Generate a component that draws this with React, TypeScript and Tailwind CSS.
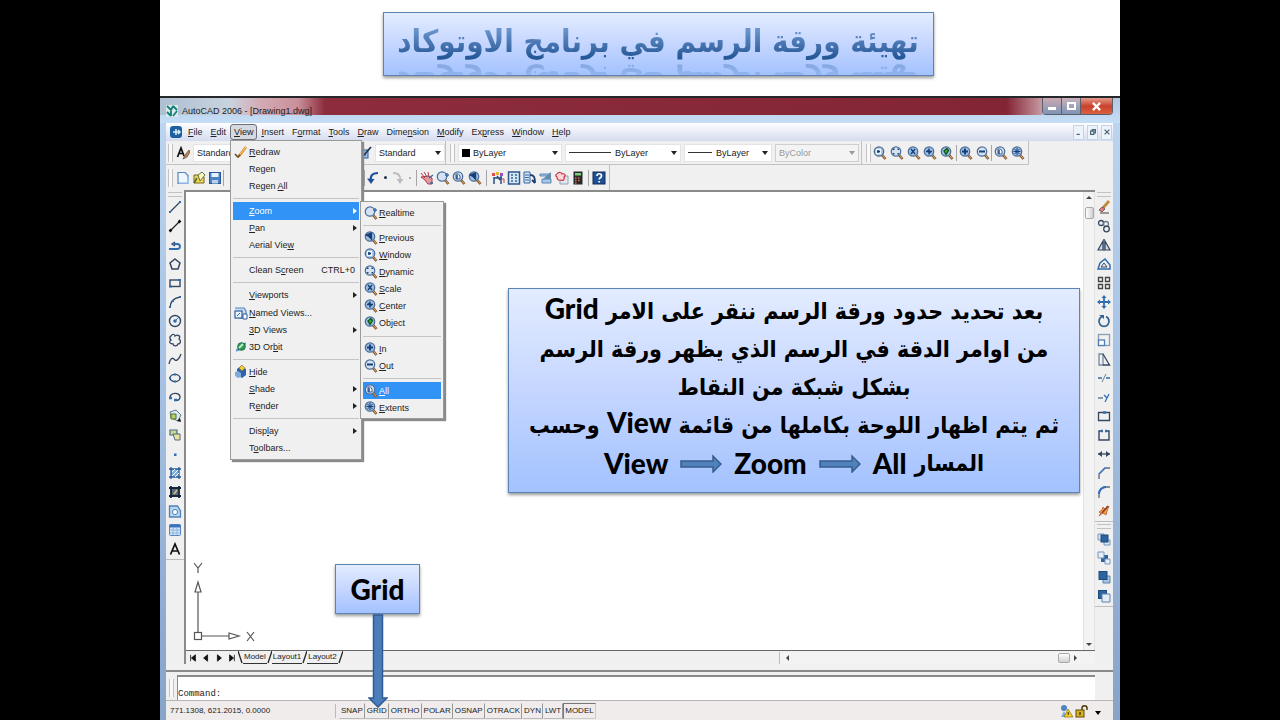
import React from "react";

type MenuEntry = {
  label: string;
  hot?: number;
  icon?: React.ReactNode;
  arrow?: boolean;
  shortcut?: string;
  active?: boolean;
  children?: (MenuEntry | null)[];
};

const Svg = ({ children, size = "size-[14px]" }: { children: React.ReactNode; size?: string }) => (
  <svg viewBox="0 0 14 14" className={`${size} shrink-0`} fill="none" aria-hidden="true">
    {children}
  </svg>
);

const Mag = ({ children, plain }: { children?: React.ReactNode; plain?: boolean }) => (
  <Svg>
    <path d="M9 9l3.5 4" stroke="#6b4a2c" strokeWidth="2.6" />
    <path d="M9.2 9l3.2 3.6" stroke="#e0a25c" strokeWidth="1.1" />
    <circle cx="6" cy="5.5" r="4.7" fill={plain ? "#d3e3f3" : "#9dbfe2"} stroke="#4f6f97" strokeWidth="1.3" />
    <g stroke="#173f78" strokeWidth="1.4">{children}</g>
  </Svg>
);

const magPrevious = (
  <Mag>
    <path d="M2.5 4l5-2v6l-3-3z" fill="#173f78" />
  </Mag>
);
const magRealtime = (
  <Mag plain>
    <path d="M9 4h4M11 2v4" stroke="#3f6ea8" />
  </Mag>
);
const magWindow = (
  <Mag>
    <path d="M3.5 3.5h4v4h-4z" stroke="#f3f8fd" />
    <path d="M5 4v3M4 5.5h3" />
  </Mag>
);
const magDynamic = (
  <Mag plain>
    <path d="M3.5 4v-.8h1M7.5 3.2h1V4M3.5 7v.8h1M8.5 7v.8h-1" />
  </Mag>
);
const magScale = (
  <Mag>
    <path d="M4 3l4 5M8 3l-4 5" />
  </Mag>
);
const magCenter = (
  <Mag>
    <path d="M6 2.5v6M3 5.5h6M4.5 4l3 3" />
  </Mag>
);
const magObject = (
  <Mag>
    <path d="M4 5l3-2.5 1.5 2L6 8.5z" fill="#35b344" stroke="#14561f" />
  </Mag>
);
const magIn = (
  <Mag>
    <path d="M6 2.5v6M3 5.5h6" strokeWidth="2" />
  </Mag>
);
const magOut = (
  <Mag plain>
    <path d="M3 5.5h6" strokeWidth="2" />
  </Mag>
);
const magAll = (
  <Mag plain>
    <path d="M4 3h2.5L8 5v3H4z" fill="#f7fbff" stroke="#3d5f8d" strokeWidth="1" />
    <path d="M5 4v4" />
  </Mag>
);
const magExtents = (
  <Mag>
    <path d="M3.5 3l5 5M8.5 3l-5 5M6 2v7M2.5 5.5h7" strokeWidth="1" />
  </Mag>
);

const cubeIcon = (
  <Svg>
    <path d="M3 4l4-3 5 3v6l-4 3-5-3z" fill="#2f62a8" />
    <path d="M5 3l3-3 3 3-3 3z" fill="#f2cc3c" stroke="#8a6a10" strokeWidth=".6" />
    <path d="M1 7l3-1 3 2v4l-3 1-3-2z" fill="#7eaadf" />
  </Svg>
);
const orbitIcon = (
  <Svg>
    <ellipse cx="7" cy="7" rx="6.5" ry="2" transform="rotate(-40 7 7)" fill="#5d9bd8" />
    <circle cx="7.5" cy="6.500" r="3.800" fill="#2f9d55" stroke="#1c6d42" />
    <path d="M5 8l4-4" stroke="#bdf0cb" strokeWidth="1.8" />
  </Svg>
);
const namedViewsIcon = (
  <Svg>
    <path d="M1 2h9l2 3v7H5" fill="#c8dcf2" stroke="#4f83bf" strokeWidth="1.2" />
    <rect x="1" y="5" width="7" height="7" fill="#eef5fc" stroke="#2d5f9f" strokeWidth="1.2" />
    <path d="M3 10l3-3M9 8h4v5H9z" stroke="#2d5f9f" fill="#fff" />
  </Svg>
);
const pencilIcon = (
  <Svg>
    <path d="M5 11L12 2" stroke="#d98a2c" strokeWidth="2.6" />
    <path d="M6 9L12 2" stroke="#fbd585" strokeWidth="1" />
    <path d="M1 9l3 3 2-2" stroke="#6b4b22" strokeWidth="1.6" />
  </Svg>
);
const letterBrush = (
  <Svg>
    <path d="M1.500 11L5 2l3 8M2.500 7.500h5" stroke="#111" strokeWidth="1.7" />
    <path d="M13 4l-4 5-2 4 4-2 3-5z" fill="#c78648" stroke="#333" strokeWidth=".6" />
  </Svg>
);
const styleIcon = (
  <Svg>
    <rect x="1" y="4" width="9" height="8" fill="#9ec3ec" stroke="#2b5b9b" />
    <path d="M3 9h5M5 6v5" stroke="#18427c" />
    <path d="M13 1L6 9" stroke="#23364f" strokeWidth="1.8" />
  </Svg>
);
const newIcon = (
  <Svg>
    <path d="M2 1.500h7l3 3v8H2z" fill="#eff6fd" stroke="#5487bf" strokeWidth="1.200" />
    <path d="M3 12h9V7" stroke="#a5c8ea" strokeWidth="1.500" />
  </Svg>
);
const openIcon = (
  <Svg>
    <path d="M2 12V4h4l1 2h5v6z" fill="#f1d55a" stroke="#7b6714" />
    <path d="M6 4l4-3 3 3-5 6z" fill="#fff3b8" stroke="#5c7a45" />
    <path d="M2 12l3-5" stroke="#4d6b2d" strokeWidth="1.500" />
  </Svg>
);
const saveIcon = (
  <Svg>
    <rect x="1.500" y="1.500" width="11" height="11" fill="#4b83c5" stroke="#275797" />
    <rect x="3.500" y="2" width="7" height="4" fill="#e9f2fb" />
    <rect x="4" y="9" width="6" height="3.500" fill="#b8d2ee" />
  </Svg>
);
const undoIcon = (
  <Svg>
    <path d="M12 2C6 2 4 5 5 10" stroke="#1f4e9a" strokeWidth="2.200" />
    <path d="M1 7.500l4 5.500 3.500-5z" fill="#1f4e9a" />
  </Svg>
);
const redoIcon = (
  <Svg>
    <path d="M2 2c6 0 8 3 7 8" stroke="#b9bcc0" strokeWidth="1.800" />
    <path d="M5.500 8L9 13l3.500-5z" fill="#b9bcc0" />
  </Svg>
);
const panIcon = (
  <Svg>
    <path d="M1 2l4 5M4 1l3 5M8 1l1 5M1 6l4 3 3 4h4V7L8 5z" fill="#e49a9a" stroke="#a63d4c" />
    <path d="M9 7l4-3M10 12h3" stroke="#3a6ba8" strokeWidth="1.500" />
  </Svg>
);
const propsIcon = (
  <Svg>
    <path d="M1 2h3v3H1z" fill="#e84b4b" />
    <path d="M5 1h3v3H5z" fill="#e5b52f" />
    <path d="M9 2h3v3H9z" fill="#a04fc2" />
    <path d="M3 6v7M3 7h8M10 5v8M6 5l3 4" stroke="#274f87" strokeWidth="1.500" />
    <path d="M11 8h2v4" stroke="#c64c35" />
  </Svg>
);
const designIcon = (
  <Svg>
    <rect x="1.500" y="1" width="11" height="12" fill="#d8e7f6" stroke="#2c578e" strokeWidth="1.500" />
    <path d="M4 4h2M8 4h2M4 7h2M8 7h2M4 10h2M8 10h2" stroke="#2c6a8e" strokeWidth="1.600" />
  </Svg>
);
const paletteIcon = (
  <Svg>
    <path d="M1 1h6v11H1z" fill="#d8e7f6" stroke="#34649f" />
    <path d="M2 4h4M2 6.500h4M2 9h4" stroke="#34649f" />
    <path d="M7 4c4 0 5 2 5 8M9 9l3 3" stroke="#1c3f70" strokeWidth="1.800" />
  </Svg>
);
const sheetIcon = (
  <Svg>
    <path d="M1 3h10v2H1zM3 8h9v4H3z" fill="#a6c8e9" stroke="#5b87b5" />
    <path d="M12 1L4 8h8z" fill="#648cae" />
  </Svg>
);
const markupIcon = (
  <Svg>
    <path d="M5 5h8v8H5z" fill="#dfe8f2" stroke="#8ea3b8" />
    <path d="M2 3c2-3 5-1 5 0 3-1 4 2 2 3 1 3-1 4-3 3-3 1-4-1-4-3-2-1-1-3 0-3z" fill="#f9d9dc" stroke="#cf3342" strokeWidth="1.200" />
  </Svg>
);
const calcIcon = (
  <Svg>
    <rect x="2.500" y=".5" width="9" height="13" fill="#26292c" />
    <rect x="4" y="2" width="6" height="2.500" fill="#7ccf7a" />
    <path d="M4 7h1.500M7 7h1.500M4 9.500h1.500M7 9.500h1.500M4 12h1.500" stroke="#e06a52" strokeWidth="1.300" />
  </Svg>
);
const helpIcon = (
  <Svg>
    <rect x="1" y="1" width="12" height="12" fill="#1f4f94" stroke="#0f2d5c" />
    <path d="M5 5c0-3 4.500-3 4.500 0 0 2-2.300 1.500-2.300 3.500M7.200 10v1.600" stroke="#fff" strokeWidth="1.700" />
  </Svg>
);

const ink = "#33475f";
const blue = "#2f6cb0";

const drawTools: [string, React.ReactNode][] = [
  ["Line", <Svg><path d="M2 12L12 2" stroke={ink} strokeWidth="1.300" /><path d="M1 12h2M11 2h2" stroke={blue} strokeWidth="2" /></Svg>],
  ["Construction line", <Svg><path d="M2 12L12 2" stroke="#222" strokeWidth="1.300" /><path d="M1.500 12.500l2-2M10.500 3.500l2-2" stroke="#111" strokeWidth="2.500" /></Svg>],
  ["Polyline", <Svg><path d="M1 11h8c4 0 4-5 0-5H6" stroke={blue} strokeWidth="1.800" /><path d="M7 4L4 6l3 2" stroke={ink} strokeWidth="1.300" /></Svg>],
  ["Polygon", <Svg><path d="M7 2l5 4-2 6H4L2 6z" stroke={ink} strokeWidth="1.500" /></Svg>],
  ["Rectangle", <Svg><rect x="2" y="4" width="10" height="6.500" stroke={ink} strokeWidth="1.400" /><path d="M1 10.500h3M10 4h3" stroke={blue} strokeWidth="2" /></Svg>],
  ["Arc", <Svg><path d="M2 13C2 7 6 3 12 2" stroke={ink} strokeWidth="1.300" /><path d="M1 12h2M4 6h2M11 2h2" stroke={blue} strokeWidth="2.200" /></Svg>],
  ["Circle", <Svg><circle cx="7" cy="7" r="5.500" stroke={ink} strokeWidth="1.400" /><circle cx="7" cy="7" r="1.800" fill={blue} /><path d="M7 7l4-4" stroke={blue} /></Svg>],
  ["Revision cloud", <Svg><path d="M3 3c2-3 4-1 4 0 3-2 6 0 4 3 3 2 1 5-1 5-1 3-5 2-5 0-4 0-4-3-2-4-2-2-1-4 0-4z" stroke={ink} strokeWidth="1.300" /></Svg>],
  ["Spline", <Svg><path d="M1 12c2-9 5-5 6-4s4 0 6-6" stroke={ink} strokeWidth="1.300" /></Svg>],
  ["Ellipse", <Svg><ellipse cx="7" cy="7" rx="5" ry="3.600" stroke={ink} strokeWidth="1.400" /><path d="M1 7h2M11 7h2M6 3.400h2M6 10.600h2" stroke={blue} strokeWidth="2" /></Svg>],
  ["Ellipse arc", <Svg><path d="M2 8C2 2 12 2 12 7c0 3-3 4-5 3" stroke={ink} strokeWidth="1.400" /><path d="M1 8h3M6 10h3" stroke={blue} strokeWidth="2.400" /></Svg>],
  ["Insert block", <Svg><path d="M2 3l6-2 5 5-3 6-7-3z" stroke="#5f7b95" fill="#dbe8f4" /><path d="M3 5h5v5H3z" fill="#b9cf62" stroke="#50742c" /><path d="M9 12l4 1-1-4z" fill="#111" /></Svg>],
  ["Make block", <Svg><path d="M2 2h7v5H2z" fill="#c9dc8b" stroke="#4c6b8a" strokeWidth="1.200" /><path d="M5 6h7v6H7z" fill="#e9e39a" stroke="#4c6b8a" /></Svg>],
  ["Point", <Svg><rect x="6" y="6.500" width="2.500" height="2.500" fill={blue} /></Svg>],
  ["Hatch", <Svg><rect x="3" y="3" width="8" height="8" fill="#7fb0e2" /><path d="M3 1v12M11 1v12M1 3h12M1 11h12" stroke="#285a97" strokeWidth="1.300" /><path d="M4 10l6-6M4 6l3-3M7 11l4-4" stroke="#fff" /></Svg>],
  ["Gradient", <Svg><rect x="3" y="3" width="8" height="8" fill="#5b6a7e" /><path d="M3 1v12M11 1v12M1 3h12M1 11h12" stroke="#16243c" strokeWidth="1.800" /><path d="M6 9l3-4" stroke="#c9c17b" strokeWidth="1.500" /></Svg>],
  ["Region", <Svg><path d="M1.500 2h8l3 5v6h-11z" fill="#b9d7f2" stroke="#4d82b8" strokeWidth="1.300" /><circle cx="7" cy="8" r="2.600" fill="#fff" stroke="#4d82b8" /></Svg>],
  ["Table", <Svg><rect x="1.500" y="1.500" width="11" height="11" rx="1" fill="#d3e5f7" stroke="#5587c4" /><path d="M1.500 3h11" stroke="#3a72bd" strokeWidth="3" /><path d="M2 7h10M2 10h10M5 4v8M9 4v8" stroke="#8fb4de" /></Svg>],
  ["Text", <Svg><path d="M2.500 12.500L7 2l4.500 10.500M4 9h6" stroke="#111" strokeWidth="1.700" /></Svg>],
];

const modifyTools: [string, React.ReactNode][] = [
  ["Erase", <Svg><path d="M6 8l6-7" stroke="#c08a3e" strokeWidth="2.800" /><path d="M2 10l3-3 3 2-3 3z" fill="#e77b7b" stroke="#444" strokeWidth=".7" /><path d="M3 13h9" stroke="#444" /></Svg>],
  ["Copy", <Svg><circle cx="4" cy="4" r="2.500" stroke={ink} strokeWidth="1.300" /><circle cx="9" cy="5" r="2.500" stroke="#6b7c90" strokeWidth="1.300" /><circle cx="9.500" cy="10" r="2.800" stroke={ink} strokeWidth="1.300" /></Svg>],
  ["Mirror", <Svg><path d="M6 3v9H1zM8 3v9h5z" fill="#cfd9e4" stroke={ink} strokeWidth="1.200" /><path d="M7 1v12" stroke={ink} /></Svg>],
  ["Offset", <Svg><path d="M1 12h12V8L8 2 3 6z" stroke={blue} strokeWidth="1.500" /><path d="M4 10h6L7 6z" stroke={ink} /></Svg>],
  ["Array", <Svg><path d="M1.500 1.500h4v4h-4zM8.500 1.500h4v4h-4zM1.500 8.500h4v4h-4zM8.500 8.500h4v4h-4z" stroke="#444" strokeWidth="1.300" /></Svg>],
  ["Move", <Svg><path d="M7 2v10M2 7h10" stroke={blue} strokeWidth="1.800" /><path d="M7 0l2.500 3h-5zM7 14l2.500-3h-5zM0 7l3-2.500v5zM14 7l-3-2.500v5z" fill={blue} /></Svg>],
  ["Rotate", <Svg><path d="M5 2.500a5 5.200 0 1 0 4 0" stroke="#356594" strokeWidth="1.800" /><path d="M2 1h5v4z" fill="#356594" /></Svg>],
  ["Scale", <Svg><rect x="1.500" y="1.500" width="11" height="11" stroke="#8b9bb0" strokeWidth="1.300" /><rect x="1.500" y="7" width="6" height="5.500" fill="#fff" stroke="#4d7fb5" strokeWidth="1.300" /></Svg>],
  ["Stretch", <Svg><path d="M2 2h4v11H2z" stroke="#75879b" strokeWidth="1.300" /><path d="M6 2l6.500 11H6" stroke={ink} strokeWidth="1.300" /></Svg>],
  ["Trim", <Svg><path d="M1 7h4M9 7h4" stroke={blue} strokeWidth="1.500" /><path d="M5 11l4-8" stroke="#6b7c90" /></Svg>],
  ["Extend", <Svg><path d="M1 8h5" stroke="#6b7c90" strokeWidth="1.500" /><path d="M8 12l4-8M7 5l3 3" stroke={blue} strokeWidth="1.200" /></Svg>],
  ["Break at point", <Svg><path d="M1.500 3.500h11v8h-11z" stroke={ink} strokeWidth="1.300" /><path d="M6 3.500h3" stroke={blue} strokeWidth="2.500" /></Svg>],
  ["Break", <Svg><path d="M5 3H2v9h10V3H9" stroke={ink} strokeWidth="1.400" /><path d="M4 3h2M8 3h2" stroke={blue} strokeWidth="2.500" /></Svg>],
  ["Join", <Svg><path d="M1 7h12" stroke={ink} strokeWidth="1.300" /><path d="M1 7l4-3v6zM13 7L9 4v6z" fill={ink} /></Svg>],
  ["Chamfer", <Svg><path d="M2 13V8l6-6h5" stroke="#5b6b7d" strokeWidth="1.300" /><path d="M2 8l6-6" stroke="#3b7cc8" strokeWidth="1.500" /></Svg>],
  ["Fillet", <Svg><path d="M2 13V9c0-4 3-7 7-7h4" stroke="#5b6b7d" strokeWidth="1.300" /><path d="M2 9c0-4 3-7 7-7" stroke="#2f6cc0" strokeWidth="2" /></Svg>],
  ["Explode", <Svg><path d="M2 8l3-2 1-3 2 2 4-3-2 5-1 4-3-2-4 3 2-3z" fill="#f0a040" stroke="#c96a42" /><path d="M5 9l6-7" stroke="#8a3a28" strokeWidth="1.500" /></Svg>],
];

const orderTools: [string, React.ReactNode][] = [
  ["Bring to front", <Svg><path d="M1 2h6v6H1zM7 8h6v5H7z" fill="#dbe7f3" stroke="#7798bd" /><rect x="4" y="3" width="7" height="7" fill="#2d639f" stroke="#1e4a7d" /></Svg>],
  ["Send to back", <Svg><rect x="4" y="4" width="7" height="7" fill="#2d639f" /><path d="M1 1h6v6H1zM8 8h5v5H8z" fill="#e6eff8" stroke="#7798bd" /></Svg>],
  ["Bring above", <Svg><path d="M6 6h7v7H6z" fill="#a9c5e0" stroke="#5c83ad" /><rect x="2" y="1.500" width="8" height="8" fill="#2d639f" stroke="#1e4a7d" /></Svg>],
  ["Send under", <Svg><rect x="1.500" y="1.500" width="8" height="8" fill="#2d639f" stroke="#1e4a7d" /><path d="M5 5h8v8H5z" fill="#e3edf7" stroke="#5c83ad" /></Svg>],
];

const zoomMenu: (MenuEntry | null)[] = [
  { label: "Realtime", hot: 0, icon: magRealtime },
  null,
  { label: "Previous", hot: 0, icon: magPrevious },
  { label: "Window", hot: 0, icon: magWindow },
  { label: "Dynamic", hot: 0, icon: magDynamic },
  { label: "Scale", hot: 0, icon: magScale },
  { label: "Center", hot: 0, icon: magCenter },
  { label: "Object", icon: magObject },
  null,
  { label: "In", hot: 0, icon: magIn },
  { label: "Out", hot: 0, icon: magOut },
  null,
  { label: "All", hot: 0, icon: magAll, active: true },
  { label: "Extents", hot: 0, icon: magExtents },
];

const viewMenu: (MenuEntry | null)[] = [
  { label: "Redraw", hot: 0, icon: pencilIcon },
  { label: "Regen", hot: 2 },
  { label: "Regen All", hot: 6 },
  null,
  { label: "Zoom", hot: 0, arrow: true, active: true, children: zoomMenu },
  { label: "Pan", hot: 0, arrow: true },
  { label: "Aerial View", hot: 10 },
  null,
  { label: "Clean Screen", hot: 7, shortcut: "CTRL+0" },
  null,
  { label: "Viewports", hot: 0, arrow: true },
  { label: "Named Views...", hot: 0, icon: namedViewsIcon },
  { label: "3D Views", hot: 0, arrow: true },
  { label: "3D Orbit", hot: 5, icon: orbitIcon },
  null,
  { label: "Hide", hot: 0, icon: cubeIcon },
  { label: "Shade", hot: 0, arrow: true },
  { label: "Render", hot: 1, arrow: true },
  null,
  { label: "Display", hot: 4, arrow: true },
  { label: "Toolbars...", hot: 1 },
];

const menus: [string, number][] = [
  ["File", 0],
  ["Edit", 0],
  ["View", 0],
  ["Insert", 0],
  ["Format", 1],
  ["Tools", 0],
  ["Draw", 0],
  ["Dimension", 4],
  ["Modify", 0],
  ["Express", 2],
  ["Window", 0],
  ["Help", 0],
];

const Hot = ({ text, at }: { text: string; at?: number }) =>
  at === undefined ? (
    <>{text}</>
  ) : (
    <>
      {text.slice(0, at)}
      <u>{text[at]}</u>
      {text.slice(at + 1)}
    </>
  );

const Menu = ({ items, className }: { items: (MenuEntry | null)[]; className: string }) => (
  <ul
    className={`absolute z-10 flex flex-col border border-[#9a9a9a] bg-[#f0f0f0] p-[2px] shadow-[2px_2px_1px_#8a8a8a] ${className}`}
  >
    {items.map((item, i) =>
      item === null ? (
        <li key={i} className="flex h-2 shrink-0 items-center">
          <hr className="w-full border-[#c4c4c4]" />
        </li>
      ) : (
        <li key={i} className="relative flex min-h-0 flex-1">
          <button
            className={`flex w-full items-center whitespace-nowrap ${
              item.active ? "bg-[#3093f5] text-white" : "text-[#222]"
            }`}
          >
            <span className="flex w-4 shrink-0 justify-center">{item.icon}</span>
            <span className="grow text-left">
              <Hot text={item.label} at={item.hot} />
            </span>
            {item.shortcut && <span className="pr-1">{item.shortcut}</span>}
            {item.arrow && <span className="mr-[2px] border-y-[3px] border-l-[4px] border-y-transparent border-l-current" />}
          </button>
          {item.children && <Menu items={item.children} className="-top-px left-[127px] h-[218px] w-[84px]" />}
        </li>
      )
    )}
  </ul>
);

const Grip = () => <span className="h-[18px] w-[5px] shrink-0 border-x border-[#c2c2c2] bg-[#f8f8f8]" />;
const Sep = () => <span className="block h-4 w-px shrink-0 bg-[#a5a5a5]" />;

const IconButton = ({ name, children }: { name: string; children: React.ReactNode }) => (
  <button aria-label={name} className="flex h-[19px] w-[16px] shrink-0 items-center justify-center">
    {children}
  </button>
);

const Combo = ({
  name,
  value,
  lead,
  disabled,
  className,
}: {
  name: string;
  value: string;
  lead?: React.ReactNode;
  disabled?: boolean;
  className: string;
}) => (
  <label
    className={`flex h-[18px] shrink-0 items-center gap-[3px] border px-[3px] ${
      disabled ? "border-[#cfcfcf] bg-[#f3f3f3] text-[#9a9a9a]" : "border-[#e4e4e4] bg-white text-[#222]"
    } ${className}`}
  >
    {lead}
    <select aria-label={name} disabled={disabled} className="min-w-0 grow appearance-none bg-transparent">
      <option>{value}</option>
    </select>
    <span className="border-x-[3px] border-t-4 border-x-transparent border-t-current" />
  </label>
);

const SideBar = ({ tools }: { tools: [string, React.ReactNode][] }) => (
  <div className="flex flex-col items-center border-b border-[#bdbdbd] pb-px">
    <span className="mt-[2px] h-[5px] w-[14px] border-y border-[#c2c2c2]" />
    {tools.map(([name, icon]) => (
      <IconButton key={name} name={name}>
        {icon}
      </IconButton>
    ))}
  </div>
);

const PathArrow = () => (
  <svg viewBox="0 0 42 20" className="mx-3 inline-block h-5 w-[42px]" aria-hidden="true">
    <path d="M1 8h32V3l8 8-8 8v-5H1z" fill="#4f81bd" stroke="#385d8a" strokeWidth="1.500" />
  </svg>
);

const Latin = ({ children }: { children: string }) => (
  <span className="font-['Lato',sans-serif] text-[28px] leading-5 font-black">{children}</span>
);

const card =
  "border border-[#5b83b5] bg-linear-to-b from-[#e3ecff] via-[#c5d6ff] to-[#a3c2ff] shadow-[0_2px_3px_#00000066]";

const App = () => {
  return (
    <div className="flex h-screen min-h-[720px] justify-center overflow-hidden bg-black">
      <div className="relative flex w-3/4 flex-col bg-white">
        <header className="flex h-24 shrink-0 justify-center pt-3 pl-[36px]">
          <div dir="rtl" className={`flex h-16 w-[551px] justify-center overflow-hidden ${card}`}>
            <h1 className="h-[56px] bg-linear-to-b from-[#6a94cc] from-30% to-[#245796] to-80% bg-clip-text font-['DejaVu_Sans_Condensed','DejaVu_Sans',sans-serif] text-[31px] leading-[56px] font-bold whitespace-nowrap text-transparent [-webkit-box-reflect:below_-14px_linear-gradient(transparent_40%,#00000066)]">
              تهيئة ورقة الرسم في برنامج الاوتوكاد
            </h1>
          </div>
        </header>

        <section className="flex min-h-0 grow flex-col border-t-2 border-[#25272b] bg-linear-to-b from-[#bdd6f0] via-[#a3bfe2] to-[#86a3c8] font-['Liberation_Sans',sans-serif] text-[9px] leading-[14px] text-[#222]">
          <div className="flex h-[25px] shrink-0 items-start bg-linear-to-b from-[#b5c7dd] to-[#c5dff8]">
            <div className="flex h-[17px] grow items-center gap-1 bg-[linear-gradient(90deg,#aebfd2_0,#c9d3df_70px,#d3acb5_100px,#c98f9a_138px,#8c2c3c_165px,#842535_96%,#c79aa2_100%)] pt-2 pl-[6px]">
              <svg viewBox="0 0 12 12" className="size-3" aria-hidden="true">
                <rect width="12" height="12" fill="#d7ece8" />
                <path d="M1 1l4 4 2-4M7 1l4 4M1 7l4 4M7 11l4-5M5 6v5" stroke="#177d78" strokeWidth="1.800" fill="none" />
              </svg>
              <span>AutoCAD 2006 - [Drawing1.dwg]</span>
            </div>
            <div className="mr-[7px] flex h-[17px] overflow-hidden rounded-b border border-t-0 border-[#5c5f6b] text-white">
              <button aria-label="Minimize" className="flex w-[18px] items-center justify-center bg-linear-to-b from-[#cda9b0] to-[#7d94b4]">
                <span className="mt-1 h-[3px] w-2 bg-white" />
              </button>
              <button aria-label="Maximize" className="flex w-5 items-center justify-center border-x border-[#5c5f6b] bg-linear-to-b from-[#c9b2bb] to-[#7d94b4]">
                <span className="h-2 w-[9px] border-2 border-white" />
              </button>
              <button aria-label="Close" className="flex w-[31px] items-center justify-center bg-linear-to-b from-[#e39a8b] via-[#c9412b] to-[#d9603f]">
                <svg viewBox="0 0 10 10" className="size-[9px]">
                  <path d="M1 1l8 8M9 1L1 9" stroke="#fff" strokeWidth="2.500" />
                </svg>
              </button>
            </div>
          </div>

          <div className="mr-[7px] ml-[6px] flex min-h-0 grow flex-col bg-[#f0f0f0]">
            <nav className="flex h-[18px] shrink-0 items-center bg-linear-to-b from-white to-[#d5dbf0] pl-1">
              <svg viewBox="0 0 12 12" className="mr-[2px] size-3" aria-hidden="true">
                <rect width="12" height="12" rx="3" fill="#1d609f" />
                <path d="M3 6h6M6 3v6M8 4l2 2-2 2" stroke="#d7f2fc" strokeWidth="1.500" fill="none" />
              </svg>
              {menus.map(([name, at]) => (
                <div key={name} className="relative">
                  <button
                    className={`px-[3px] ${
                      name === "View" ? "rounded-[3px] border border-[#6d7079] bg-[#d5d9e2]" : "border border-transparent"
                    }`}
                  >
                    <Hot text={name} at={at} />
                  </button>
                  {name === "View" && <Menu items={viewMenu} className="top-full left-0 h-[320px] w-[132px]" />}
                </div>
              ))}
              <div className="mr-px ml-auto flex gap-[3px] text-[#4a6378]">
                {["M2 8h4", "M2 4h4v4H2zM4 4V2h4v4H6", "M2 2l6 6M8 2l-6 6"].map((d, i) => (
                  <button
                    key={d}
                    aria-label={["Minimize drawing", "Restore drawing", "Close drawing"][i]}
                    className="flex h-[15px] w-[11px] items-center justify-center border border-[#c5d3e4] bg-[#edf3fb]"
                  >
                    <svg viewBox="0 0 10 10" className="size-2 shrink-0">
                      <path d={d} stroke="currentColor" strokeWidth="1.500" fill="none" />
                    </svg>
                  </button>
                ))}
              </div>
            </nav>

            <div className="flex h-6 shrink-0 items-center">
              <div className="flex h-full w-[280px] shrink-0 items-center gap-[2px] border-r border-b border-[#c2c2c2] pl-[2px]">
                <Grip />
                <IconButton name="Text style">{letterBrush}</IconButton>
                <Combo name="Text style name" value="Standard" className="w-[84px]" />
                <Combo name="Dimension style name" value="Standard" className="grow" />
                <IconButton name="Table style">{styleIcon}</IconButton>
                <Combo name="Table style name" value="Standard" className="w-[70px]" />
              </div>
              <div className="flex h-full w-[416px] shrink-0 items-center gap-[3px] border-r border-b border-[#c2c2c2] pl-1">
                <Grip />
                <Combo
                  name="Color"
                  value="ByLayer"
                  className="w-[104px]"
                  lead={<span className="size-2 shrink-0 bg-black" />}
                />
                <Combo
                  name="Linetype"
                  value="ByLayer"
                  className="w-[116px]"
                  lead={<span className="mr-px h-px w-[42px] shrink-0 bg-[#333]" />}
                />
                <Combo
                  name="Lineweight"
                  value="ByLayer"
                  className="w-[88px]"
                  lead={<span className="mr-px h-px w-6 shrink-0 bg-[#333]" />}
                />
                <Combo name="Plot style" value="ByColor" disabled className="w-[84px]" />
              </div>
              <div className="flex h-full w-[167px] shrink-0 items-center border-r border-b border-[#c2c2c2] pl-1">
                <Grip />
                <div className="flex grow items-center justify-between pr-[2px] pl-px">
                  <IconButton name="Zoom window">{magWindow}</IconButton>
                  <IconButton name="Zoom dynamic">{magDynamic}</IconButton>
                  <IconButton name="Zoom scale">{magScale}</IconButton>
                  <IconButton name="Zoom center">{magCenter}</IconButton>
                  <IconButton name="Zoom object">{magObject}</IconButton>
                  <Sep />
                  <IconButton name="Zoom in">{magIn}</IconButton>
                  <IconButton name="Zoom out">{magOut}</IconButton>
                  <Sep />
                  <IconButton name="Zoom all">{magAll}</IconButton>
                  <IconButton name="Zoom extents">{magExtents}</IconButton>
                </div>
              </div>
            </div>

            <div className="flex h-[25px] w-[444px] shrink-0 items-center border-r border-[#c2c2c2] pl-[2px]">
              <Grip />
              <div className="flex pl-[2px]">
                <IconButton name="New">{newIcon}</IconButton>
                <IconButton name="Open">{openIcon}</IconButton>
                <IconButton name="Save">{saveIcon}</IconButton>
              </div>
              <Sep />
              <div className="ml-auto flex items-center pr-[2px]">
                <Sep />
                <IconButton name="Undo">{undoIcon}</IconButton>
                <span className="mx-[3px] size-[3px] rounded-full bg-[#234]" />
                <IconButton name="Redo">{redoIcon}</IconButton>
                <span className="mx-[3px] size-[2px] rounded-full bg-[#999]" />
                <div className="mx-[2px]">
                  <Sep />
                </div>
                <IconButton name="Pan realtime">{panIcon}</IconButton>
                <IconButton name="Zoom realtime">{magRealtime}</IconButton>
                <IconButton name="Zoom flyout">{magAll}</IconButton>
                <IconButton name="Zoom previous">{magPrevious}</IconButton>
                <div className="mx-[3px]">
                  <Sep />
                </div>
                <IconButton name="Properties">{propsIcon}</IconButton>
                <IconButton name="DesignCenter">{designIcon}</IconButton>
                <IconButton name="Tool palettes">{paletteIcon}</IconButton>
                <IconButton name="Sheet set manager">{sheetIcon}</IconButton>
                <IconButton name="Markup set manager">{markupIcon}</IconButton>
                <IconButton name="QuickCalc">{calcIcon}</IconButton>
                <div className="mx-[2px]">
                  <Sep />
                </div>
                <IconButton name="Help">{helpIcon}</IconButton>
              </div>
            </div>

            <div className="flex min-h-0 grow">
              <aside className="w-[18px] shrink-0">
                <SideBar tools={drawTools} />
              </aside>
              <div className="flex min-w-0 grow flex-col border-t-2 border-l-2 border-[#8a8a8a]">
                <div className="flex min-h-0 grow">
                  <div className="flex grow items-end bg-white pb-[6px] pl-1">
                    <svg viewBox="0 0 66 82" className="h-[82px] w-[66px]" fill="none" stroke="#555" strokeWidth="1.200">
                      <path d="M4 1l4 5 4-5M8 6v5M8 70V30M5 30l3-10 3 10zM12 74h27M39 71l10 3-10 3zM57 70l7 9M64 70l-7 9" />
                      <rect x="4.500" y="70.500" width="7" height="7" />
                    </svg>
                  </div>
                  <div className="flex w-3 shrink-0 flex-col items-center border-x border-[#e2e2e2] bg-[#f3f3f3] py-1">
                    <span className="border-x-[3px] border-b-[3px] border-x-transparent border-b-[#444]" />
                    <span className="mt-2 h-3 w-[9px] rounded-xs border border-[#a8a8a8] bg-linear-to-r from-white to-[#d0d0d0]" />
                    <span className="mt-auto border-x-[3px] border-t-[3px] border-x-transparent border-t-[#444]" />
                  </div>
                </div>
                <div className="flex h-[14px] shrink-0 items-center border-t border-[#666] text-[8px]">
                  <div className="flex w-[52px] justify-around">
                    {["M2 1v8M8 1L3 5l5 4z", "M7 1L2 5l5 4z", "M3 1l5 4-5 4z", "M8 1v8M2 1l5 4-5 4z"].map((d, i) => (
                      <button key={d} aria-label={["First tab", "Previous tab", "Next tab", "Last tab"][i]}>
                        <svg viewBox="0 0 10 10" className="size-2">
                          <path d={d} fill="#111" stroke="#111" />
                        </svg>
                      </button>
                    ))}
                  </div>
                  {["Model", "Layout1", "Layout2"].map((tab) => (
                    <button key={tab} className="flex h-[13px] items-center">
                      <svg viewBox="0 0 5 13" className="h-[13px] w-[5px]">
                        <path d={tab === "Model" ? "M0 0l4 12" : "M5 0L1 12"} stroke="#222" strokeWidth="1.300" />
                      </svg>
                      <span className="h-[13px] border-b border-[#333] px-px leading-3">{tab}</span>
                    </button>
                  ))}
                  <svg viewBox="0 0 5 13" className="h-[13px] w-[5px]">
                    <path d="M5 0L1 12" stroke="#222" strokeWidth="1.300" />
                  </svg>
                  <div className="ml-auto flex h-3 w-[316px] items-center border-l border-[#bbb] bg-[#f3f3f3] pr-[18px] pl-[6px]">
                    <span className="border-y-[3px] border-r-[3px] border-y-transparent border-r-[#444]" />
                    <span className="ml-auto h-[10px] w-3 rounded-xs border border-[#a8a8a8] bg-linear-to-b from-white to-[#d0d0d0]" />
                    <span className="ml-1 border-y-[3px] border-l-[3px] border-y-transparent border-l-[#444]" />
                  </div>
                </div>
              </div>
              <aside className="w-[18px] shrink-0">
                <SideBar tools={modifyTools} />
                <SideBar tools={orderTools} />
              </aside>
            </div>

            <div className="mt-[6px] flex h-[30px] shrink-0 items-stretch border-t-2 border-[#8a8a8a] pt-[3px]">
              <div className="flex w-[11px] items-center justify-center">
                <Grip />
              </div>
              <label className="mr-[18px] flex grow items-end border-t-2 border-l border-[#8a8a8a] bg-white font-['Liberation_Mono',monospace] text-[9px] leading-3">
                Command:
                <input className="min-w-0 grow outline-none" />
              </label>
            </div>

            <footer className="flex h-5 shrink-0 items-center border-t border-[#b5b5b5] bg-[#f0ecec] text-[8px]">
              <span className="w-[170px] border-r border-[#bbb] pl-1">771.1308, 621.2015, 0.0000</span>
              <div className="flex pl-[3px]">
                {["SNAP", "GRID", "ORTHO", "POLAR", "OSNAP", "OTRACK", "DYN", "LWT", "MODEL"].map((mode) => (
                  <button
                    key={mode}
                    className={`border px-px ${
                      mode === "MODEL" ? "border-[#777] border-r-[#ccc] border-b-[#ccc]" : "border-transparent border-r-[#999] border-b-[#bbb]"
                    }`}
                  >
                    {mode}
                  </button>
                ))}
              </div>
              <div className="mr-3 ml-auto flex items-center gap-[2px]">
                <Svg>
                  <circle cx="5" cy="4" r="3" fill="#4b83c5" />
                  <path d="M2 13l3-6 3 6z" fill="#7faadd" />
                  <path d="M9 5l5 8H5z" fill="#f5cf22" stroke="#86700c" strokeWidth=".7" />
                  <path d="M9.200 8v3" stroke="#222" />
                </Svg>
                <Svg>
                  <rect x="1" y="6" width="8" height="7" fill="#d8b220" stroke="#5d4b08" />
                  <path d="M7 6V4c0-3 5-3 5 0v2M5 8v3" stroke="#4a3c08" strokeWidth="1.500" />
                </Svg>
                <span className="mt-1 ml-1 border-x-[3px] border-t-4 border-x-transparent border-t-black" />
              </div>
            </footer>
          </div>
        </section>

        <div
          dir="rtl"
          className={`absolute top-[288px] right-[40px] z-20 h-[205px] w-[572px] pt-[3px] text-center font-['DejaVu_Sans_Condensed','DejaVu_Sans',sans-serif] text-[23px] leading-[38px] font-bold whitespace-nowrap text-black ${card}`}
        >
          <p>
            بعد تحديد حدود ورقة الرسم ننقر على الامر <Latin>Grid</Latin>
          </p>
          <p>من اوامر الدقة في الرسم الذي يظهر ورقة الرسم</p>
          <p>بشكل شبكة من النقاط</p>
          <p>
            ثم يتم اظهار اللوحة بكاملها من قائمة <Latin>View</Latin> وحسب
          </p>
          <p className="flex items-center justify-center">
            <span>المسار</span>
            <span dir="ltr" className="mr-2 flex items-center">
              <Latin>View</Latin>
              <PathArrow />
              <Latin>Zoom</Latin>
              <PathArrow />
              <Latin>All</Latin>
            </span>
          </p>
        </div>

        <div className="absolute top-[564px] left-[175px] z-20 flex w-[85px] flex-col items-center">
          <div className={`flex h-[50px] w-full items-center justify-center font-bold text-black ${card}`}>
            <Latin>Grid</Latin>
          </div>
          <svg viewBox="0 0 20 94" className="h-[94px] w-5" aria-hidden="true">
            <path d="M5.500 1h9v83h4.500l-9 9-9-9h4.500z" fill="#4a7ebb" stroke="#2f5b93" strokeWidth="1.500" />
          </svg>
        </div>
      </div>
    </div>
  );
};

export default App;
